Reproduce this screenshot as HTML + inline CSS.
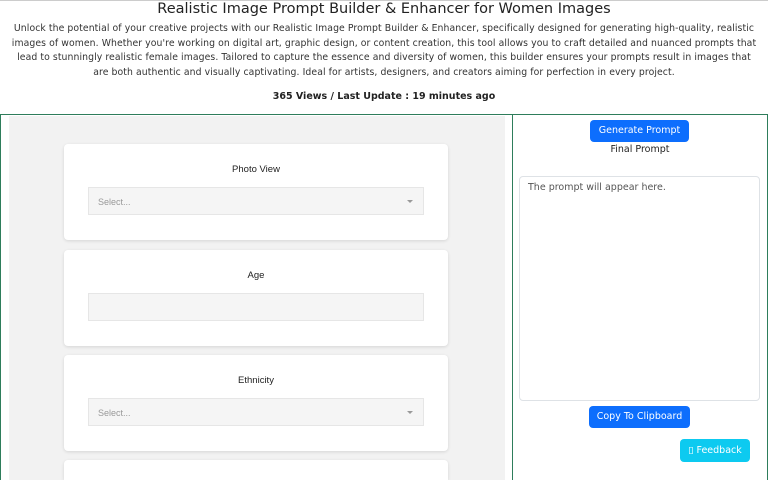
<!DOCTYPE html>
<html><head><style>
*{box-sizing:border-box;margin:0;padding:0}
html,body{width:768px;height:480px;overflow:hidden}
body{background:#fff;font-family:"DejaVu Sans","Liberation Sans",sans-serif;color:#222;position:relative}
.top{position:absolute;left:0;top:0;width:768px;height:1px;background:#ccc}
h1{position:absolute;top:1px;left:0;width:768px;text-align:center;font-weight:normal;font-size:14.5px;color:#222}
.desc{position:absolute;top:22px;left:8px;width:752px;text-align:center;font-size:9.3px;line-height:14.7px;color:#333;letter-spacing:0.08px}
.views{position:absolute;top:91px;left:0;width:768px;text-align:center;font-size:9.5px;font-weight:bold;color:#222}
.left{position:absolute;left:0;top:114px;width:513px;height:366px;border:1px solid #2e7d5b;border-right:none;border-bottom:none;background:#fff}
.gray{position:absolute;left:8px;top:1px;width:496px;height:365px;background:#f2f2f2}
.card{position:absolute;left:64px;width:384px;height:96px;background:#fff;border-radius:4px;box-shadow:0 1px 3px rgba(0,0,0,.12)}
.card .lab{position:absolute;top:20px;width:100%;text-align:center;font-size:9.5px;color:#222;font-family:"Liberation Sans",sans-serif}
.card .sel{position:absolute;left:24px;top:43px;width:336px;height:28px;background:#f5f5f5;border:1px solid #e6e6e6;font-size:9px;color:#999;padding:9px 9px;font-family:"Liberation Sans",sans-serif}
.sel .ar{position:absolute;right:10px;top:12px;border:3px solid transparent;border-top:3px solid #999}
.right{position:absolute;left:512px;top:114px;width:256px;height:366px;border:1px solid #2e7d5b;border-bottom:none}
.btn{position:absolute;background:#0d6efd;color:#fff;font-size:9.5px;border-radius:4px;text-align:center}
.fp{position:absolute;left:512px;top:144px;width:256px;text-align:center;font-size:9.5px;color:#222}
.ta{position:absolute;left:519px;top:176px;width:241px;height:225px;border:1px solid #dee2e6;border-radius:4px;font-size:9.5px;color:#555;padding:5px 8px}
.fb{position:absolute;left:680px;top:439px;width:70px;height:23px;background:#0dcaf0;color:#fff;border-radius:4px;font-size:9.5px;line-height:23px;text-align:center}
</style></head><body>
<div class="top"></div>
<h1>Realistic Image Prompt Builder &amp; Enhancer for Women Images</h1>
<div class="desc">Unlock the potential of your creative projects with our Realistic Image Prompt Builder &amp; Enhancer, specifically designed for generating high-quality, realistic<br>images of women. Whether you're working on digital art, graphic design, or content creation, this tool allows you to craft detailed and nuanced prompts that<br>lead to stunningly realistic female images. Tailored to capture the essence and diversity of women, this builder ensures your prompts result in images that<br>are both authentic and visually captivating. Ideal for artists, designers, and creators aiming for perfection in every project.</div>
<div class="views">365 Views / Last Update : 19 minutes ago</div>
<div class="left"><div class="gray"></div></div>
<div class="card" style="top:144px"><div class="lab">Photo View</div><div class="sel">Select...<span class="ar"></span></div></div>
<div class="card" style="top:250px"><div class="lab">Age</div><div class="sel"></div></div>
<div class="card" style="top:355px"><div class="lab">Ethnicity</div><div class="sel">Select...<span class="ar"></span></div></div>
<div class="card" style="top:460px;height:20px;border-radius:4px 4px 0 0"></div>
<div class="right"></div>
<div class="btn" style="left:590px;top:120px;width:99px;height:22px;line-height:22px">Generate Prompt</div>
<div class="fp">Final Prompt</div>
<div class="ta">The prompt will appear here.</div>
<div class="btn" style="left:589px;top:406px;width:101px;height:22px;line-height:22px">Copy To Clipboard</div>
<div class="fb">▯ Feedback</div>
</body></html>
